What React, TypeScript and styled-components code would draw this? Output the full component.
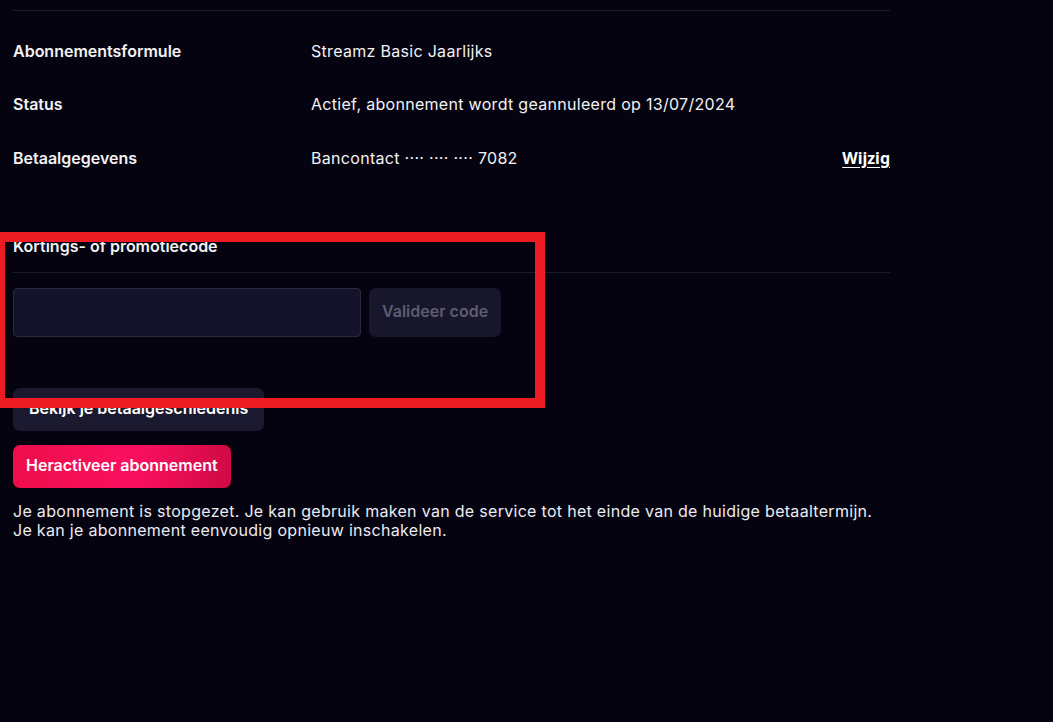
import React from "react";
import styled, { createGlobalStyle } from "styled-components";

const GlobalStyle = createGlobalStyle`
  html, body {
    margin: 0;
    padding: 0;
    background: #05030f;
  }
  body {
    font-family: Inter, "Noto Sans", sans-serif;
    color: #f2f2f5;
  }
`;

const Page = styled.div`
  position: relative;
  min-height: 722px;
  padding: 10px 0 0 13px;
  box-sizing: border-box;
`;

const Content = styled.div`
  width: 877px;
  display: flex;
  flex-direction: column;
`;

const Rule = styled.div`
  height: 1px;
  background: #1c1b2e;
`;

const Details = styled.div`
  display: flex;
  flex-direction: column;
  padding-top: 13px;
`;

const Row = styled.div`
  display: grid;
  grid-template-columns: 298px 1fr auto;
  align-items: center;
  height: 53.5px;
  font-size: 16px;
`;

const Label = styled.span`
  font-weight: 600;
`;

const Value = styled.span`
  font-weight: 400;
  letter-spacing: 0.3px;
`;

const EditLink = styled.a`
  font-family: "Noto Sans", "Open Sans", sans-serif;
  font-weight: 700;
  font-size: 16px;
  color: #ffffff;
  text-decoration: underline;
  text-underline-offset: 3px;
  cursor: pointer;
`;

const SectionTitle = styled.h3`
  margin: 51.5px 0 0;
  padding-bottom: 16px;
  font-size: 16px;
  line-height: 20px;
  font-weight: 600;
  border-bottom: 1px solid #1c1b2e;
`;

const CodeForm = styled.div`
  display: flex;
  gap: 8px;
  margin-top: 15px;
`;

const CodeInput = styled.input`
  width: 348px;
  height: 49px;
  box-sizing: border-box;
  background: #14132a;
  border: 1px solid #2a2940;
  border-radius: 4px;
  color: #fff;
  font: inherit;
  padding: 0 14px;
  outline: none;
`;

const Button = styled.button<{ $variant?: "dark" | "muted" | "primary" }>`
  height: ${(p) => (p.$variant === "muted" ? "49px" : "43px")};
  padding: 0 ${(p) => (p.$variant === "dark" ? "16px" : "13px")} 4px;
  border: none;
  border-radius: 7px;
  font-family: Inter, "Noto Sans", sans-serif;
  font-size: 16px;
  font-weight: 600;
  cursor: pointer;
  align-self: flex-start;
  color: ${(p) => (p.$variant === "muted" ? "#5d5c70" : "#ffffff")};
  background: ${(p) =>
    p.$variant === "primary"
      ? "linear-gradient(90deg, #ee0d4a 0%, #fb1060 55%, #d00a45 100%)"
      : p.$variant === "muted"
      ? "#17162b"
      : "#1a1930"};
`;

const Actions = styled.div`
  display: flex;
  flex-direction: column;
  gap: 14px;
  margin-top: 51px;
`;

const Note = styled.p`
  margin: 14px 0 0;
  font-size: 16px;
  line-height: 19px;
  letter-spacing: 0.3px;
  color: #ececf2;
`;

const Highlight = styled.div`
  position: absolute;
  left: -5px;
  top: 232px;
  width: 550px;
  height: 176px;
  box-sizing: border-box;
  border: 10px solid #ed1c24;
  pointer-events: none;
`;

const rows = [
  { label: "Abonnementsformule", value: "Streamz Basic Jaarlijks" },
  { label: "Status", value: "Actief, abonnement wordt geannuleerd op 13/07/2024" },
  { label: "Betaalgegevens", value: "Bancontact ···· ···· ···· 7082", editable: true },
];

export default function App() {
  return (
    <Page>
      <GlobalStyle />
      <Content>
        <Rule />
        <Details>
          {rows.map((r) => (
            <Row key={r.label}>
              <Label>{r.label}</Label>
              <Value>{r.value}</Value>
              {r.editable ? <EditLink>Wijzig</EditLink> : <span />}
            </Row>
          ))}
        </Details>

        <SectionTitle>Kortings- of promotiecode</SectionTitle>
        <CodeForm>
          <CodeInput type="text" />
          <Button $variant="muted">Valideer code</Button>
        </CodeForm>

        <Actions>
          <Button $variant="dark">Bekijk je betaalgeschiedenis</Button>
          <Button $variant="primary">Heractiveer abonnement</Button>
        </Actions>

        <Note>
          Je abonnement is stopgezet. Je kan gebruik maken van de service tot het einde van de huidige betaaltermijn.
          <br />
          Je kan je abonnement eenvoudig opnieuw inschakelen.
        </Note>
      </Content>
      <Highlight />
    </Page>
  );
}
